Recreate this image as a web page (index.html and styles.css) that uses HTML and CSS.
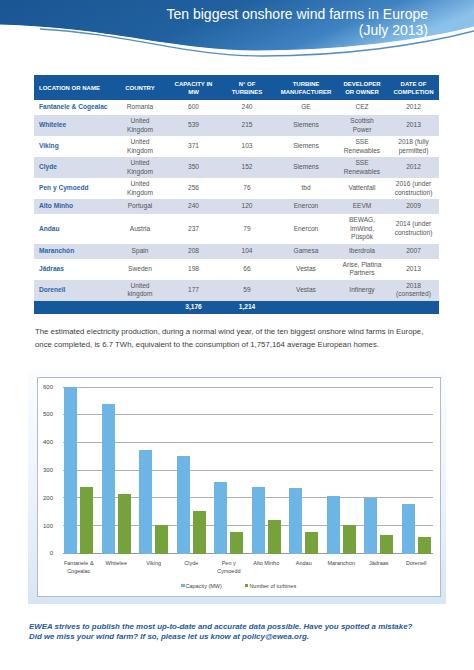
FILE: index.html
```html
<!DOCTYPE html>
<html lang="en">
<head>
<meta charset="utf-8">
<title>Ten biggest onshore wind farms in Europe</title>
<link rel="stylesheet" href="styles.css">
</head>
<body>
<header class="banner">
  <svg class="banner-bg" viewBox="0 0 474 60" width="474" height="60" aria-hidden="true">
    <defs>
      <linearGradient id="bg" x1="0" y1="0" x2="1" y2="0.25">
        <stop offset="0" stop-color="#1a5592"/>
        <stop offset="0.5" stop-color="#21619f"/>
        <stop offset="0.8" stop-color="#3f82c2"/>
        <stop offset="1" stop-color="#8cc2ea"/>
      </linearGradient>
    </defs>
    <path d="M0,0 H474 V27 C420,41 340,51 255,51 C175,51 110,28 0,25 Z" fill="url(#bg)"/>
    <path d="M0,25.5 C110,28.5 175,51.5 255,51.5 C340,51.5 420,41.5 474,27.5" fill="none" stroke="#ffffff" stroke-width="2"/>
    <path d="M40,29 C130,34 185,56 262,56 C345,56 420,45 474,31" fill="none" stroke="#3a78b8" stroke-width="1.3" stroke-opacity="0.85"/>
  </svg>
  <h1 class="title">Ten biggest onshore wind farms in Europe<br>(July 2013)</h1>
</header>

<table class="farms">
  <colgroup>
    <col class="c-name"><col class="c-country"><col class="c-cap"><col class="c-turb"><col class="c-manu"><col class="c-dev"><col class="c-date">
  </colgroup>
  <thead>
    <tr>
      <th class="name">LOCATION OR NAME</th>
      <th>COUNTRY</th>
      <th>CAPACITY IN<br>MW</th>
      <th>N° OF<br>TURBINES</th>
      <th>TURBINE<br>MANUFACTURER</th>
      <th>DEVELOPER<br>OR OWNER</th>
      <th>DATE OF<br>COMPLETION</th>
    </tr>
  </thead>
  <tbody>
    <tr><td class="name">Fantanele &amp; Cogealac</td><td>Romania</td><td>600</td><td>240</td><td>GE</td><td>CEZ</td><td>2012</td></tr>
    <tr class="alt"><td class="name">Whitelee</td><td>United<br>Kingdom</td><td>539</td><td>215</td><td>Siemens</td><td>Scottish<br>Power</td><td>2013</td></tr>
    <tr><td class="name">Viking</td><td>United<br>Kingdom</td><td>371</td><td>103</td><td>Siemens</td><td>SSE<br>Renewables</td><td>2018 (fully<br>permitted)</td></tr>
    <tr class="alt"><td class="name">Clyde</td><td>United<br>Kingdom</td><td>350</td><td>152</td><td>Siemens</td><td>SSE<br>Renewables</td><td>2012</td></tr>
    <tr><td class="name">Pen y Cymoedd</td><td>United<br>Kingdom</td><td>256</td><td>76</td><td>tbd</td><td>Vattenfall</td><td>2016 (under<br>construction)</td></tr>
    <tr class="alt"><td class="name">Alto Minho</td><td>Portugal</td><td>240</td><td>120</td><td>Enercon</td><td>EEVM</td><td>2009</td></tr>
    <tr><td class="name">Andau</td><td>Austria</td><td>237</td><td>79</td><td>Enercon</td><td>BEWAG,<br>ImWind,<br>Püspök</td><td>2014 (under<br>construction)</td></tr>
    <tr class="alt"><td class="name">Maranchón</td><td>Spain</td><td>208</td><td>104</td><td>Gamesa</td><td>Iberdrola</td><td>2007</td></tr>
    <tr><td class="name">Jädraas</td><td>Sweden</td><td>198</td><td>66</td><td>Vestas</td><td>Arise, Platina<br>Partners</td><td>2013</td></tr>
    <tr class="alt"><td class="name">Dorenell</td><td>United<br>kingdom</td><td>177</td><td>59</td><td>Vestas</td><td>Infinergy</td><td>2018<br>(consented)</td></tr>
    <tr class="total"><td></td><td></td><td>3,176</td><td>1,214</td><td></td><td></td><td></td></tr>
  </tbody>
</table>

<p class="intro">The estimated electricity production, during a normal wind year, of the ten biggest onshore wind farms in Europe,<br>once completed, is 6.7 TWh, equivalent to the consumption of 1,757,164 average European homes.</p>

<section class="chart-frame">
  <div class="chart-panel">
    <div class="plot-row">
      <div class="y-axis"><span>600</span><span>500</span><span>400</span><span>300</span><span>200</span><span>100</span><span>0</span></div>
      <div class="plot">
        <div class="grid"><div></div><div></div><div></div><div></div><div></div><div></div></div>
        <div class="bars">
          <div class="group"><div class="bar cap" style="height:167px"></div><div class="bar tur" style="height:66.8px"></div></div>
          <div class="group"><div class="bar cap" style="height:150px"></div><div class="bar tur" style="height:59.8px"></div></div>
          <div class="group"><div class="bar cap" style="height:103.3px"></div><div class="bar tur" style="height:28.7px"></div></div>
          <div class="group"><div class="bar cap" style="height:97.4px"></div><div class="bar tur" style="height:42.3px"></div></div>
          <div class="group"><div class="bar cap" style="height:71.3px"></div><div class="bar tur" style="height:21.2px"></div></div>
          <div class="group"><div class="bar cap" style="height:66.8px"></div><div class="bar tur" style="height:33.4px"></div></div>
          <div class="group"><div class="bar cap" style="height:66px"></div><div class="bar tur" style="height:22px"></div></div>
          <div class="group"><div class="bar cap" style="height:57.9px"></div><div class="bar tur" style="height:28.9px"></div></div>
          <div class="group"><div class="bar cap" style="height:55.1px"></div><div class="bar tur" style="height:18.4px"></div></div>
          <div class="group"><div class="bar cap" style="height:49.3px"></div><div class="bar tur" style="height:16.4px"></div></div>
        </div>
      </div>
    </div>
    <div class="x-labels">
      <span>Fantanele &amp;<br>Cogealac</span><span>Whitelee</span><span>Viking</span><span>Clyde</span><span>Pen y<br>Cymoedd</span><span>Alto Minho</span><span>Andau</span><span>Maranchon</span><span>Jädraas</span><span>Dorenell</span>
    </div>
    <div class="legend">
      <span class="key"><i class="sw cap"></i>Capacity (MW)</span>
      <span class="key"><i class="sw tur"></i>Number of turbines</span>
    </div>
  </div>
</section>

<p class="note">EWEA strives to publish the most up-to-date and accurate data possible. Have you spotted a mistake?<br>Did we miss your wind farm? If so, please let us know at policy@ewea.org.</p>
</body>
</html>
```

FILE: styles.css
```css
* { box-sizing: border-box; }

body {
  margin: 0;
  width: 474px;
  background: #ffffff;
  font-family: "Liberation Sans", Arial, sans-serif;
}

/* banner */
.banner {
  position: relative;
  height: 60px;
}
.banner-bg {
  position: absolute;
  left: 0;
  top: 0;
  display: block;
}
.title {
  position: relative;
  margin: 0;
  padding: 7px 46px 0 0;
  text-align: right;
  color: #ffffff;
  font-weight: normal;
  font-size: 14px;
  line-height: 15.6px;
}

/* table */
.farms {
  margin: 15px 0 0 34px;
  width: 405px;
  border-collapse: collapse;
  table-layout: fixed;
  font-size: 6.6px;
  color: #555555;
}
.c-name { width: 77px; }
.c-country { width: 58px; }
.c-cap { width: 49px; }
.c-turb { width: 58px; }
.c-manu { width: 60px; }
.c-dev { width: 52px; }
.c-date { width: 51px; }

.farms th {
  background: #15589b;
  color: #ffffff;
  font-size: 6px;
  font-weight: bold;
  line-height: 8px;
  height: 25px;
  padding: 0;
  text-align: center;
  vertical-align: middle;
  white-space: nowrap;
}
.farms th.name {
  text-align: left;
  padding-left: 5px;
}
.farms td {
  height: 15px;
  line-height: 8.5px;
  padding: 2px 0;
  text-align: center;
  vertical-align: middle;
  white-space: nowrap;
}
.farms td.name {
  text-align: left;
  padding-left: 5px;
  color: #2b64a6;
  font-weight: bold;
}
.farms tr.alt td { background: #d7ddeb; }
.farms tr.total td {
  background: #15589b;
  color: #ffffff;
  font-weight: bold;
  height: 13px;
  padding: 0;
}

/* intro paragraph */
.intro {
  margin: 12.5px 0 0;
  padding-left: 35px;
  font-size: 7.8px;
  line-height: 12.5px;
  color: #3c3c3c;
}

/* chart */
.chart-frame {
  margin: 18.5px 0 0 28px;
  width: 418px;
  height: 234px;
  padding: 7px 5px 0 9px;
  background: linear-gradient(to bottom, #fbfdff 0%, #eaf2fa 55%, #d7e6f4 100%);
}
.chart-panel {
  height: 220px;
  border: 1px solid #b3bac6;
  background: #ffffff;
  padding-top: 9px;
}
.plot-row {
  display: flex;
  align-items: flex-start;
  gap: 5px;
}
.y-axis {
  width: 17px;
  height: 175px;
  margin-top: -4px;
  padding-right: 2px;
  display: flex;
  flex-direction: column;
  justify-content: space-between;
  text-align: right;
  font-size: 6px;
  line-height: 8px;
  color: #444444;
}
.plot {
  display: grid;
  width: 375px;
  height: 167px;
}
.grid, .bars { grid-area: 1 / 1; }
.grid {
  display: flex;
  flex-direction: column;
  margin: 0 2px 0 3px;
  border-bottom: 1px solid #9a9a9a;
}
.grid div {
  flex: 1;
  border-top: 1px solid #b0b0b0;
}
.bars {
  display: flex;
  align-items: flex-end;
}
.group {
  width: 37.5px;
  display: flex;
  align-items: flex-end;
  gap: 3px;
  padding-left: 4.3px;
}
.bar { width: 13px; }
.cap { background: #6db5e5; }
.tur { background: #76a23b; }

.x-labels {
  display: flex;
  margin: 1px 0 0 22px;
  font-size: 5.5px;
  line-height: 8.5px;
  color: #444444;
}
.x-labels span {
  width: 37.5px;
  text-align: center;
}
.legend {
  display: flex;
  gap: 23px;
  margin-top: 6px;
  padding-left: 143px;
  font-size: 5.5px;
  line-height: 8px;
  color: #444444;
}
.key {
  display: flex;
  align-items: center;
  gap: 1px;
}
.sw {
  width: 3.5px;
  height: 3.5px;
  display: block;
}

/* footer note */
.note {
  margin: 18.5px 0 0;
  padding-left: 29px;
  font-size: 7.9px;
  line-height: 10px;
  font-weight: bold;
  font-style: italic;
  color: #1e5a9a;
}
```
